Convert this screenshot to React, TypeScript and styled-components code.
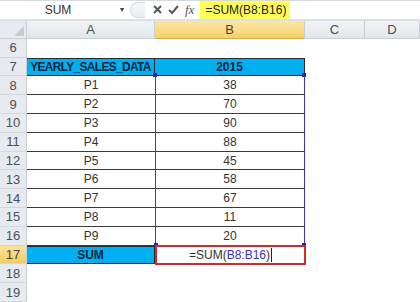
import { Fragment } from "react";
import styled, { createGlobalStyle, css } from "styled-components";

const GlobalStyle = createGlobalStyle`
    html, body {
        margin: 0;
        padding: 0;
        background: #ffffff;
    }
    body {
        font-family: "Liberation Sans", Arial, sans-serif;
    }
`;

const Window = styled.div`
    width: 420px;
    height: 302px;
    overflow: hidden;
    background: #ffffff;
    display: flex;
    flex-direction: column;
`;

const FormulaBar = styled.div`
    height: 20px;
    display: flex;
    align-items: stretch;
    border-top: 1px solid #d6dbe2;
    border-bottom: 2px solid #dde1e7;
    background: #ffffff;
    box-sizing: content-box;
`;

const NameBox = styled.div`
    width: 116px;
    display: flex;
    align-items: center;
    justify-content: center;
    font-size: 12px;
    color: #333;
`;

const DropArrow = styled.div`
    width: 12px;
    display: flex;
    align-items: center;
    justify-content: center;
    font-size: 7px;
    color: #444;
`;

const Grip = styled.div`
    width: 14px;
    margin: 1px 4px 1px 2px;
    border-radius: 8px 0 0 8px;
    border: 1px solid #d7dbe0;
    border-right: none;
    background: linear-gradient(#f7f8fa, #e9ecf0);
`;

const FxButtons = styled.div`
    display: flex;
    align-items: center;
    gap: 6px;
    padding: 0 6px 0 4px;
    color: #5a5f66;
`;

const FxLabel = styled.span`
    font-family: "Liberation Serif", serif;
    font-style: italic;
    font-size: 13px;
    color: #555;
`;

const FormulaInput = styled.div`
    width: 85px;
    background: #ffff55;
    display: flex;
    align-items: center;
    padding-left: 5px;
    font-size: 12px;
    color: #222;
`;

const Sheet = styled.div`
    display: grid;
    grid-template-columns: 27px 128px 150px 60px 55px;
    grid-template-rows: 18px;
    grid-auto-rows: 18.8px;
`;

const Corner = styled.div`
    background: #e7eaee;
    border-right: 1px solid #c9ced5;
    border-bottom: 1px solid #c9ced5;
    display: flex;
    align-items: flex-end;
    justify-content: flex-end;
    padding: 0 2px 2px 0;
`;

const CornerMark = styled.div`
    width: 0;
    height: 0;
    border-left: 10px solid transparent;
    border-bottom: 10px solid #c7ccd3;
`;

const ColHead = styled.div<{ $active?: boolean }>`
    display: flex;
    align-items: center;
    justify-content: center;
    font-size: 13px;
    color: #4a4f57;
    background: linear-gradient(#f1f3f6, #e2e6eb);
    border-right: 1px solid #c9ced5;
    border-bottom: 1px solid #c9ced5;
    ${(p) =>
        p.$active &&
        css`
            background: linear-gradient(#fbe6a6, #f7d06b);
            border-bottom: 1px solid #e2a93a;
            color: #444;
        `}
`;

const RowHead = styled.div<{ $active?: boolean }>`
    display: flex;
    align-items: center;
    justify-content: center;
    font-size: 13px;
    color: #4a4f57;
    background: #e7eaee;
    border-right: 1px solid #c9ced5;
    border-bottom: 1px solid #d3d8de;
    ${(p) =>
        p.$active &&
        css`
            background: linear-gradient(#fbe29a, #f6cb5e);
            color: #444;
        `}
`;

type Kind = "empty" | "title" | "data" | "formula";

const Cell = styled.div<{ $kind: Kind; $range?: boolean }>`
    position: relative;
    display: flex;
    align-items: center;
    justify-content: center;
    font-size: 12px;
    color: #333;
    box-sizing: border-box;
    ${(p) =>
        p.$kind === "title" &&
        css`
            background: #00b0f0;
            color: #10243a;
            font-weight: bold;
            border: 1px solid #2a2a2a;
            border-left: none;
        `}
    ${(p) =>
        p.$kind === "data" &&
        css`
            border-bottom: 1px solid #3a3a3a;
        `}
    ${(p) =>
        p.$range &&
        css`
            border-left: 1px solid #3535d0;
            border-right: 1px solid #3535d0;
        `}
    ${(p) =>
        p.$kind === "formula" &&
        css`
            border: 2px solid #d8262c;
            margin: -1px -1px -1px 0;
        `}
`;

const TitleText = styled.span`
    letter-spacing: -0.7px;
`;

const Handle = styled.span<{ $side: "left" | "right"; $edge: "top" | "bottom" }>`
    position: absolute;
    width: 4px;
    height: 4px;
    background: #2020d0;
    ${(p) => (p.$side === "left" ? "left: -2px;" : "right: -2px;")}
    ${(p) => (p.$edge === "top" ? "top: -2px;" : "bottom: -2px;")}
`;

const Ref = styled.span`
    color: #3434c8;
`;

const Caret = styled.span`
    display: inline-block;
    width: 1px;
    height: 14px;
    background: #222;
    margin-left: 1px;
    vertical-align: middle;
`;

const dataRows = [
    ["P1", 38],
    ["P2", 70],
    ["P3", 90],
    ["P4", 88],
    ["P5", 45],
    ["P6", 58],
    ["P7", 67],
    ["P8", 11],
    ["P9", 20],
] as const;

function EmptyRow({ n }: { n: number }) {
    return (
        <>
            <RowHead>{n}</RowHead>
            <Cell $kind="empty" />
            <Cell $kind="empty" />
            <Cell $kind="empty" />
            <Cell $kind="empty" />
        </>
    );
}

function App() {
    return (
        <Window>
            <GlobalStyle />
            <FormulaBar>
                <NameBox>SUM</NameBox>
                <DropArrow>▼</DropArrow>
                <Grip />
                <FxButtons>
                    <svg width="9" height="9" viewBox="0 0 9 9">
                        <path d="M1 1 L8 8 M8 1 L1 8" stroke="#55595f" strokeWidth="2" />
                    </svg>
                    <svg width="11" height="10" viewBox="0 0 11 10">
                        <path d="M1 5 L4 8 L10 1" stroke="#55595f" strokeWidth="2" fill="none" />
                    </svg>
                    <FxLabel>fx</FxLabel>
                </FxButtons>
                <FormulaInput>=SUM(B8:B16)</FormulaInput>
            </FormulaBar>
            <Sheet>
                <Corner>
                    <CornerMark />
                </Corner>
                <ColHead>A</ColHead>
                <ColHead $active>B</ColHead>
                <ColHead>C</ColHead>
                <ColHead>D</ColHead>

                <EmptyRow n={6} />

                <RowHead>7</RowHead>
                <Cell $kind="title">
                    <TitleText>YEARLY_SALES_DATA</TitleText>
                </Cell>
                <Cell $kind="title">
                    2015
                    <Handle $side="left" $edge="bottom" />
                    <Handle $side="right" $edge="bottom" />
                </Cell>
                <Cell $kind="empty" />
                <Cell $kind="empty" />

                {dataRows.map(([name, value], i) => (
                    <Fragment key={name}>
                        <RowHead>{i + 8}</RowHead>
                        <Cell $kind="data">{name}</Cell>
                        <Cell $kind="data" $range>
                            {value}
                            {i === dataRows.length - 1 && (
                                <>
                                    <Handle $side="left" $edge="bottom" />
                                    <Handle $side="right" $edge="bottom" />
                                </>
                            )}
                        </Cell>
                        <Cell $kind="empty" />
                        <Cell $kind="empty" />
                    </Fragment>
                ))}

                <RowHead $active>17</RowHead>
                <Cell $kind="title">SUM</Cell>
                <Cell $kind="formula">
                    <span>
                        =SUM(<Ref>B8:B16</Ref>)
                        <Caret />
                    </span>
                </Cell>
                <Cell $kind="empty" />
                <Cell $kind="empty" />

                <EmptyRow n={18} />
                <EmptyRow n={19} />
            </Sheet>
        </Window>
    );
}

export default App;
